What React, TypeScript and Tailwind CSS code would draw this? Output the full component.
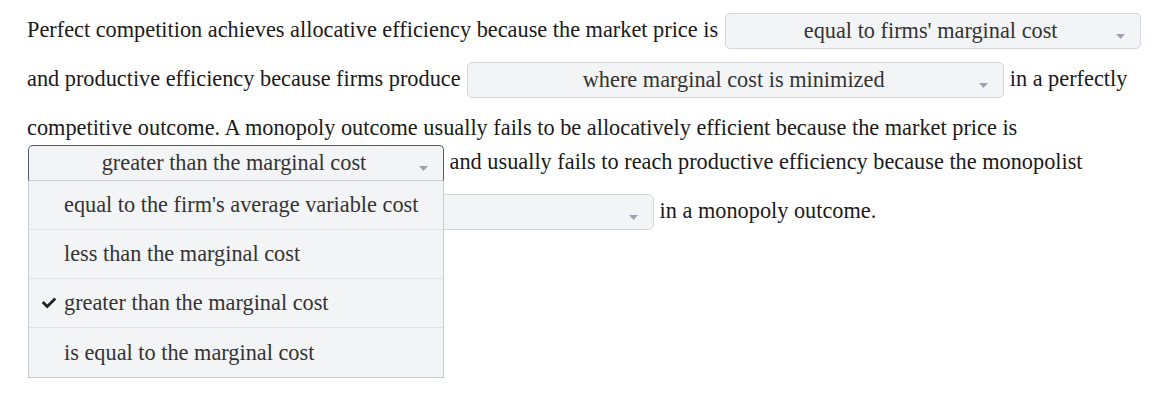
import React from 'react';
import { FaCheck } from 'react-icons/fa';

const serif = { fontFamily: '"Liberation Serif", "Times New Roman", serif' };

function Caret() {
    return (
        <svg width="9" height="5" viewBox="0 0 9 5" className="absolute right-[15px] top-1/2 translate-y-[3px]">
            <path d="M0 0 L9 0 L4.5 5 Z" fill="#9ca3af" />
        </svg>
    );
}

interface ISelectProps {
    value: string;
    width: string;
    open?: boolean;
    children?: React.ReactNode;
}

function Select({ value, width, open, children }: ISelectProps) {
    return (
        <span className={`relative inline-block align-top ml-[1px] mb-[13px] ${width}`}>
            <span
                className={`relative flex items-center justify-center h-[36px] pr-[4px] bg-[#f3f4f6] text-[#333] ${
                    open
                        ? 'rounded-t-[5px] border border-[#555a66] border-b-[#c8cbd0]'
                        : 'rounded-[5px] border border-[#d4d6da]'
                }`}
            >
                {value}
                <Caret />
            </span>
            {children}
        </span>
    );
}

const options = [
    "equal to the firm's average variable cost",
    'less than the marginal cost',
    'greater than the marginal cost',
    'is equal to the marginal cost',
];

export default function App() {
    return (
        <div className="bg-white min-h-[408px] pl-[27px] pr-[20px] pt-[13px]" style={serif}>
            <p className="text-[22.3px] leading-[34px] text-[#1a1a1a]">
                Perfect competition achieves allocative efficiency because the market price is{' '}
                <Select value="equal to firms' marginal cost" width="w-[416px]" />{' '}
                and productive efficiency because firms produce{' '}
                <Select value="where marginal cost is minimized" width="w-[537px]" />{' '}
                in a perfectly competitive outcome. A monopoly outcome usually fails to be allocatively
                efficient because the market price is{' '}
                <Select value="greater than the marginal cost" width="w-[416px]" open>
                    <span className="absolute left-0 top-[36px] z-10 flex flex-col w-full bg-[#f3f4f6] border border-[#c8cbd0] border-t-0">
                        {options.map((opt, i) => (
                            <span
                                key={opt}
                                className={`flex items-center h-[49px] pl-[13px] text-[#333] ${
                                    i < options.length - 1 ? 'border-b border-[#e0e2e6]' : ''
                                }`}
                            >
                                <span className="flex w-[22px] shrink-0 items-center">
                                    {i === 2 && <FaCheck size={14} className="text-[#222]" />}
                                </span>
                                {opt}
                            </span>
                        ))}
                    </span>
                </Select>{' '}
                and usually fails to reach productive efficiency because the monopolist{' '}
                <Select value="" width="w-[626px]" />{' '}
                in a monopoly outcome.
            </p>
        </div>
    );
}
